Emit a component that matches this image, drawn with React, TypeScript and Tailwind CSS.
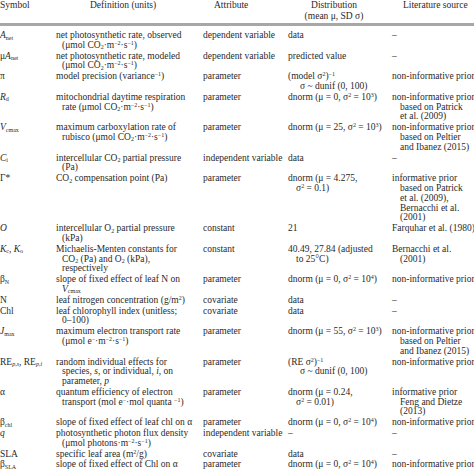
import React from "react";

type Cell = React.ReactNode[];
type Row = { sym: React.ReactNode; def: Cell; attr: string; dist: Cell; lit: Cell };

const CO2 = (
  <>
    CO<sub className="text-[6px]">2</sub>
  </>
);
const unit = (
  <>
    (μmol {CO2}·m<sup className="text-[6px]">−2</sup>·s<sup className="text-[6px]">−1</sup>)
  </>
);
const s2 = (
  <>
    σ<sup className="text-[6px]">2</sup>
  </>
);
const sub = (t: string) => <sub className="text-[6px]">{t}</sub>;
const sup = (t: string) => <sup className="text-[6px]">{t}</sup>;

const rows: Row[] = [
  {
    sym: (<><i>A</i>{sub("net")}</>),
    def: ["net photosynthetic rate, observed", unit],
    attr: "dependent variable",
    dist: ["data"],
    lit: ["–"],
  },
  {
    sym: (<>μ<i>A</i>{sub("net")}</>),
    def: ["net photosynthetic rate, modeled", unit],
    attr: "dependent variable",
    dist: ["predicted value"],
    lit: ["–"],
  },
  {
    sym: "π",
    def: [<>model precision (variance{sup("−1")})</>],
    attr: "parameter",
    dist: [<>(model {s2}){sup("−1")}</>, <span className="pl-[4px]">σ ~ dunif (0, 100)</span>],
    lit: ["non-informative prior"],
  },
  {
    sym: (<><i>R</i>{sub("d")}</>),
    def: ["mitochondrial daytime respiration", <>rate {unit}</>],
    attr: "parameter",
    dist: [<>dnorm (μ = 0, {s2} = 10{sup("3")})</>],
    lit: ["non-informative prior", "based on Patrick", "et al. (2009)"],
  },
  {
    sym: (<><i>V</i>{sub("cmax")}</>),
    def: ["maximum carboxylation rate of", <>rubisco {unit}</>],
    attr: "parameter",
    dist: [<>dnorm (μ = 25, {s2} = 10{sup("3")})</>],
    lit: ["non-informative prior", "based on Peltier", "and Ibanez (2015)"],
  },
  {
    sym: (<><i>C</i>{sub("i")}</>),
    def: [<>intercellular {CO2} partial pressure</>, "(Pa)"],
    attr: "independent variable",
    dist: ["data"],
    lit: ["–"],
  },
  {
    sym: "Γ*",
    def: [<>{CO2} compensation point (Pa)</>],
    attr: "parameter",
    dist: ["dnorm (μ = 4.275,", <>{s2} = 0.1)</>],
    lit: ["informative prior", "based on Patrick", "et al. (2009),", "Bernacchi et al.", "(2001)"],
  },
  {
    sym: <i>O</i>,
    def: [<>intercellular O{sub("2")} partial pressure</>, "(kPa)"],
    attr: "constant",
    dist: ["21"],
    lit: ["Farquhar et al. (1980)"],
  },
  {
    sym: (<><i>K</i>{sub("c")}, <i>K</i>{sub("o")}</>),
    def: ["Michaelis-Menten constants for", <>{CO2} (Pa) and O{sub("2")} (kPa),</>, "respectively"],
    attr: "constant",
    dist: ["40.49, 27.84 (adjusted", "to 25°C)"],
    lit: ["Bernacchi et al.", "(2001)"],
  },
  {
    sym: (<>β{sub("N")}</>),
    def: ["slope of fixed effect of leaf N on", <><i>V</i>{sub("cmax")}</>],
    attr: "parameter",
    dist: [<>dnorm (μ = 0, {s2} = 10{sup("4")})</>],
    lit: ["non-informative prior"],
  },
  {
    sym: "N",
    def: [<>leaf nitrogen concentration (g/m{sup("2")})</>],
    attr: "covariate",
    dist: ["data"],
    lit: ["–"],
  },
  {
    sym: "Chl",
    def: ["leaf chlorophyll index (unitless;", "0–100)"],
    attr: "covariate",
    dist: ["data"],
    lit: ["–"],
  },
  {
    sym: (<><i>J</i>{sub("max")}</>),
    def: ["maximum electron transport rate", <>(μmol e{sup("−")}·m{sup("−2")}·s{sup("−1")})</>],
    attr: "parameter",
    dist: [<>dnorm (μ = 55, {s2} = 10{sup("3")})</>],
    lit: ["non-informative prior", "based on Peltier", "and Ibanez (2015)"],
  },
  {
    sym: (<>RE<sub className="text-[6px] italic">p,s</sub>, RE<sub className="text-[6px] italic">p,i</sub></>),
    def: [
      "random individual effects for",
      <>species, <i>s</i>, or individual, <i>i</i>, on</>,
      <>parameter, <i>p</i></>,
    ],
    attr: "parameter",
    dist: [<>(RE {s2}){sup("−1")}</>, <span className="pl-[4px]">σ ~ dunif (0, 100)</span>],
    lit: ["non-informative prior"],
  },
  {
    sym: "α",
    def: ["quantum efficiency of electron", <>transport (mol e{sup("−")}·mol quanta {sup("−1")})</>],
    attr: "parameter",
    dist: ["dnorm (μ = 0.24,", <>{s2} = 0.01)</>],
    lit: ["informative prior", "Feng and Dietze", "(2013)"],
  },
  {
    sym: (<>β{sub("chl")}</>),
    def: ["slope of fixed effect of leaf chl on α"],
    attr: "parameter",
    dist: [<>dnorm (μ = 0, {s2} = 10{sup("4")})</>],
    lit: ["non-informative prior"],
  },
  {
    sym: <i>q</i>,
    def: ["photosynthetic photon flux density", <>(μmol photons·m{sup("−2")}·s{sup("−1")})</>],
    attr: "independent variable",
    dist: ["–"],
    lit: ["–"],
  },
  {
    sym: "SLA",
    def: [<>specific leaf area (m{sup("2")}/g)</>],
    attr: "covariate",
    dist: ["data"],
    lit: ["–"],
  },
  {
    sym: (<>β{sub("SLA")}</>),
    def: ["slope of fixed effect of Chl on α"],
    attr: "parameter",
    dist: [<>dnorm (μ = 0, {s2} = 10{sup("4")})</>],
    lit: ["non-informative prior"],
  },
];

function Lines({ lines, indent }: { lines: Cell; indent: string }) {
  return (
    <div>
      {lines.map((l, i) => (
        <div key={i} className={i === 0 ? "whitespace-nowrap" : `whitespace-nowrap ${indent}`}>
          {l}
        </div>
      ))}
    </div>
  );
}

export default function App() {
  return (
    <div
      className="w-[474px] h-[474px] overflow-hidden bg-white text-[#2a2a2a] text-[9.5px] leading-[9.8px]"
      style={{ fontFamily: '"Liberation Serif", "Times New Roman", serif' }}
    >
      <div className="w-[600px] ml-[-1px]">
        {/* header */}
        <div className="grid grid-cols-[57px_147px_85px_104px_180px] h-[23px] pt-[1px]">
          <div className="pl-[1px]">Symbol</div>
          <div className="pl-[34px] whitespace-nowrap">Definition (units)</div>
          <div className="pl-[11px]">Attribute</div>
          <div className="flex flex-col items-center w-[92px] whitespace-nowrap">
            <div>Distribution</div>
            <div className="pt-[1px]">(mean μ, SD σ)</div>
          </div>
          <div className="pl-[11px] whitespace-nowrap">Literature source</div>
        </div>
        <div className="h-[3px] bg-[#a7a7a7]" />
        <div className="h-[5px]" />
        {rows.map((r, i) => (
          <div key={i} className="grid grid-cols-[57px_147px_85px_104px_180px] pb-[1px]">
            <div className="pl-[1px] whitespace-nowrap">{r.sym}</div>
            <Lines lines={r.def} indent="pl-[6px]" />
            <div className="whitespace-nowrap">{r.attr}</div>
            <Lines lines={r.dist} indent="pl-[8px]" />
            <Lines lines={r.lit} indent="pl-[8px]" />
          </div>
        ))}
      </div>
    </div>
  );
}
